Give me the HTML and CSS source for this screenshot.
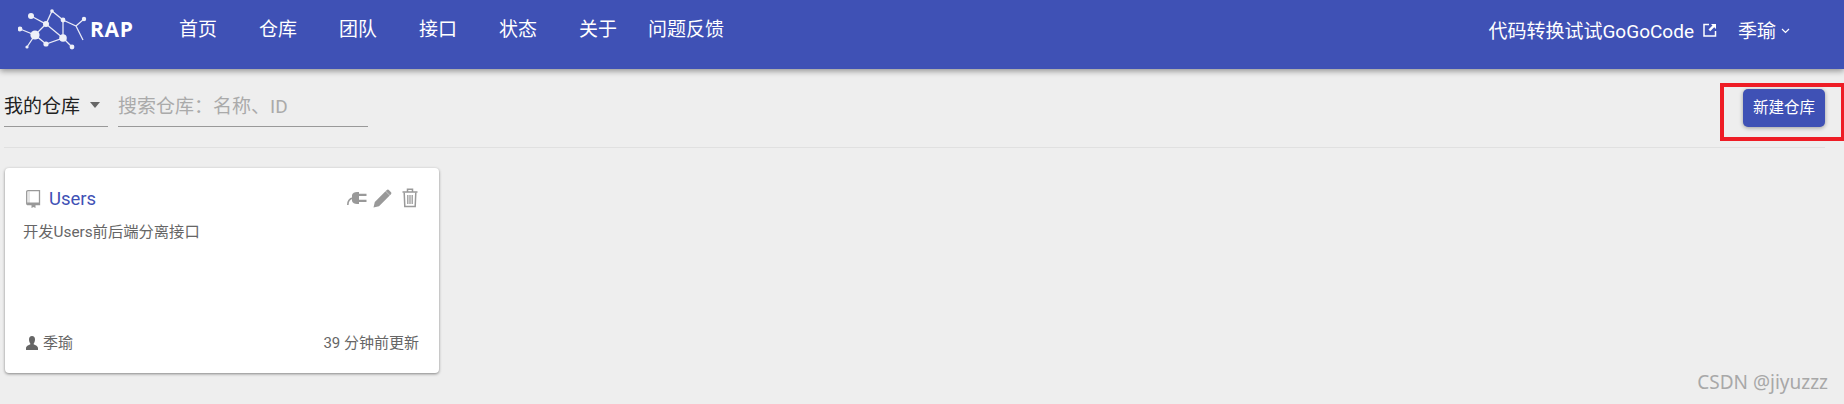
FILE: index.html
```html
<!DOCTYPE html>
<html lang="en">
<head>
    <meta charset="UTF-8">
    <meta name="viewport" content="width=device-width, initial-scale=1.0">
    <title>RAP</title>
    <link rel="stylesheet" href="styles.css">
</head>
<body>
    <header class="topbar">
        <a class="logo">
            <svg class="logo-mark" width="70" height="50" viewBox="0 0 70 50">
                <g stroke="#e8eaf6" stroke-width="1.3" fill="none">
                    <path d="M13 7 28 15 34 2 45 11 58 17 66 10M58 17 65 31M45 11 45 29M28 15 17 26 2 20M28 15 45 29 28 35 17 26 9 38M45 29 54 38M34 2 45 11"/>
                </g>
                <g fill="#eef0f8">
                    <circle cx="13" cy="7" r="3"/>
                    <circle cx="28" cy="15" r="3"/>
                    <circle cx="34" cy="2" r="1.8"/>
                    <circle cx="45" cy="11" r="2.4"/>
                    <circle cx="66" cy="10" r="2.2"/>
                    <circle cx="2" cy="20" r="2.4"/>
                    <circle cx="17" cy="26" r="4.6"/>
                    <circle cx="28" cy="35" r="2.6"/>
                    <circle cx="45" cy="29" r="3.8"/>
                    <circle cx="54" cy="38" r="2.4"/>
                    <circle cx="9" cy="38" r="1.6"/>
                </g>
            </svg>
            <span class="logo-text">RAP</span>
        </a>
        <ul class="nav">
            <li>首页</li>
            <li>仓库</li>
            <li>团队</li>
            <li>接口</li>
            <li>状态</li>
            <li>关于</li>
            <li>问题反馈</li>
        </ul>
        <div class="nav-right">
            <span class="gogo">代码转换试试GoGoCode</span>
            <svg class="ext-icon" width="14" height="14" viewBox="0 0 14 14">
                <path d="M6 1.5H1v11.500h11.500V8" fill="none" stroke="#fff" stroke-width="1.500"/>
                <path d="M8 1h5v5l-1.800-1.800-4 4-1.700-1.700 4-4z" fill="#fff"/>
            </svg>
            <span class="user">季瑜</span>
            <svg class="chevron" width="9" height="6" viewBox="0 0 9 6">
                <path d="M1 1l3.500 3.500L8 1" fill="none" stroke="#fff" stroke-width="1.200"/>
            </svg>
        </div>
    </header>

    <main class="content">
        <div class="toolbar">
            <div class="select">
                <span>我的仓库</span>
                <i class="caret"></i>
            </div>
            <div class="search">搜索仓库：名称、ID</div>
            <button class="new-btn">新建仓库</button>
            <div class="highlight"></div>
        </div>

        <div class="card">
            <div class="card-head">
                <svg class="book" width="15" height="18" viewBox="0 0 15 18">
                    <path d="M2 .7h11.500v14H2c-.8 0-1.300-.5-1.300-1.200V2C.7 1.200 1.200.7 2 .7z" fill="none" stroke="#999" stroke-width="1.300"/>
                    <path d="M3 1v13" stroke="#ccc" stroke-width="1"/>
                    <path d="M1 12.500h12.500v2.500H2c-1 0-1-2.500-1-2.500zM5.500 15h4v3l-2-1-2 1z" fill="#999"/>
                </svg>
                <a class="card-title">Users</a>
                <div class="card-tools">
                    <svg class="tool-plug" width="20" height="14" viewBox="0 0 20 14">
                        <path d="M.8 14c0-4 2-6.500 5.200-7" fill="none" stroke="#999" stroke-width="1.600"/>
                        <path d="M5 4C5.500 2 7.500 1 10 1h2v12h-2C7.500 13 5.500 12 5 10z" fill="#999"/>
                        <path d="M11 2.800h8.500V5H11zM11 8.800h8.500V11H11z" fill="#999"/>
                    </svg>
                    <svg class="tool-pencil" width="19" height="19" viewBox="0 0 19 19">
                        <path d="M.5 18.500l1.300-5.500L12.500 2.300l4.200 4.200L6 17.200zM13.600 1.200c.8-.8 1.800-.8 2.500 0l1.700 1.700c.8.700.8 1.700 0 2.500l-.9.900-4.200-4.200z" fill="#999"/>
                    </svg>
                    <svg class="tool-trash" width="16" height="20" viewBox="0 0 16 20">
                        <path d="M.5 4h15M5.500 4V1.300h5V4" fill="none" stroke="#999" stroke-width="1.500"/>
                        <path d="M2.200 4.500l.6 14h10.400l.6-14" fill="none" stroke="#999" stroke-width="1.500"/>
                        <path d="M5.800 7v9M8 7v9M10.200 7v9" stroke="#999" stroke-width="1.300"/>
                    </svg>
                </div>
            </div>
            <p class="card-desc">开发Users前后端分离接口</p>
            <div class="card-foot">
                <span class="owner">
                    <svg width="12" height="14" viewBox="0 0 12 14">
                        <path d="M6 0c2 0 3 1.500 3 3.500S8 7 7.500 8c0 .8 4.500 1.500 4.500 4v2H0v-2c0-2.500 4.500-3.200 4.500-4C4 7 3 5.500 3 3.500S4 0 6 0z" fill="#666"/>
                    </svg>
                    季瑜
                </span>
                <span>39 分钟前更新</span>
            </div>
        </div>
    </main>

    <div class="watermark">CSDN @jiyuzzz</div>
</body>
</html>
```

FILE: styles.css
```css
* {
    box-sizing: border-box;
}
html,
body {
    height: 100%;
}
body {
    margin: 0;
    background-color: #eeeeee;
    font-family: Roboto, "Noto Sans CJK SC", sans-serif;
    color: #333;
    overflow: hidden;
    position: relative;
}
.topbar {
    display: flex;
    align-items: flex-start;
    height: 69px;
    padding-left: 18px;
    padding-right: 54px;
    background-color: #3f51b5;
    color: #fff;
    box-shadow: 0 2px 6px rgba(0, 0, 0, 0.4);
    font-size: 19px;
}
.logo {
    display: flex;
    align-items: flex-start;
    width: 152px;
    padding-top: 8px;
}
.logo-mark {
    flex: none;
    margin-top: 1px;
    margin-right: 3px;
}
.logo-text {
    font-family: "Open Sans", sans-serif;
    font-weight: 700;
    font-size: 21px;
    line-height: 24px;
    margin-top: 9px;
    margin-left: -1px;
    letter-spacing: 0.7px;
}
.nav {
    display: flex;
    margin: 0;
    margin-left: -12px;
    padding: 0;
    list-style: none;
    line-height: 59px;
}
.nav li {
    min-width: 80px;
    padding: 0 10px;
    text-align: center;
    white-space: nowrap;
}
.nav-right {
    display: flex;
    align-items: center;
    height: 59px;
    margin-left: auto;
}
.ext-icon {
    margin-left: 9px;
}
.user {
    margin-left: 21px;
}
.chevron {
    margin-left: 5px;
    margin-top: 2px;
}
.content {
    padding: 20px 19px 0 4px;
}
.toolbar {
    display: flex;
    align-items: flex-start;
    height: 59px;
    border-bottom: 1px solid #e0e0e0;
    position: relative;
}
.select {
    display: flex;
    align-items: center;
    width: 104px;
    height: 38px;
    padding-bottom: 6px;
    border-bottom: 1px solid #999;
    font-size: 19px;
    color: #222;
}
.caret {
    width: 0;
    height: 0;
    margin-left: 10px;
    border-left: 5.5px solid transparent;
    border-right: 5.500px solid transparent;
    border-top: 6px solid #666;
}
.search {
    display: flex;
    align-items: center;
    width: 250px;
    height: 38px;
    margin-left: 10px;
    padding-bottom: 6px;
    border-bottom: 1px solid #999;
    font-size: 19px;
    color: #aaa;
}
.new-btn {
    height: 38px;
    width: 82px;
    margin-left: auto;
    padding: 0 0 4px;
    border: none;
    border-radius: 5px;
    background-color: #3f51b5;
    color: #fff;
    font-family: inherit;
    font-size: 15.5px;
    box-shadow: 0 1px 4px rgba(0, 0, 0, 0.35);
}
.highlight {
    position: absolute;
    top: -6px;
    right: -19px;
    width: 124px;
    height: 58px;
    border: 4px solid #ee1c25;
    border-right-width: 3px;
}
.card {
    display: flex;
    flex-direction: column;
    width: 434px;
    height: 205px;
    margin-top: 20px;
    margin-left: 1px;
    padding: 19px 21px 20px 19px;
    background-color: #fff;
    border-radius: 4px;
    box-shadow: 0 1px 3px rgba(0, 0, 0, 0.45);
}
.card-head {
    display: flex;
    align-items: center;
    height: 24px;
}
.book {
    margin-left: 2px;
    margin-right: 8px;
}
.card-title {
    font-size: 18.5px;
    color: #3f51b5;
}
.card-tools {
    display: flex;
    align-items: center;
    margin-left: auto;
    margin-top: -2px;
}
.tool-pencil {
    margin-left: 6px;
}
.tool-trash {
    margin-left: 10px;
}
.card-desc {
    margin: 11px 0 0 -1px;
    font-size: 15.3px;
    line-height: 20px;
    color: #666;
}
.card-foot {
    display: flex;
    justify-content: space-between;
    margin-top: auto;
    margin-right: -1px;
    font-size: 15px;
    line-height: 20px;
    color: #666;
}
.owner {
    display: flex;
    align-items: center;
    gap: 5px;
    margin-left: 2px;
}
.watermark {
    position: absolute;
    right: 16px;
    bottom: 9px;
    font-family: "Noto Sans", sans-serif;
    font-size: 19px;
    color: #a8a8a8;
}
```
